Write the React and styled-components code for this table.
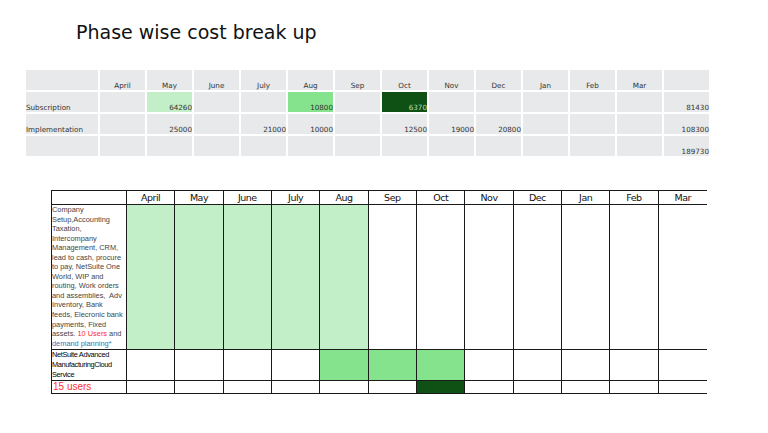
import React from "react";
import styled, { createGlobalStyle } from "styled-components";

const GlobalStyle = createGlobalStyle`
  html, body {
    margin: 0;
    padding: 0;
    background: #ffffff;
  }
`;

const Page = styled.div`
  width: 768px;
  height: 433px;
  overflow: hidden;
  display: flex;
  flex-direction: column;
  font-family: "DejaVu Sans", Verdana, sans-serif;
`;

const Title = styled.h1`
  margin: 20px 0 0 76px;
  font-size: 19px;
  line-height: 24px;
  font-weight: 400;
  color: #111;
`;

const CostGrid = styled.div`
  margin: 26px 0 0 26px;
  display: grid;
  grid-template-columns: 72px repeat(13, 45px);
  grid-auto-rows: 20px;
  gap: 2px;
  width: 683px;
`;

const CostCell = styled.div`
  background: ${(p) => p.$bg || "#e7e9eb"};
  color: ${(p) => p.$color || "#333"};
  font-size: 7.2px;
  line-height: 9px;
  display: flex;
  align-items: flex-end;
  justify-content: ${(p) => p.$align || "flex-start"};
  box-sizing: border-box;
  white-space: nowrap;
`;

const PlanTable = styled.div`
  margin: 34px 0 0 51px;
  width: 656px;
  display: grid;
  grid-template-columns: 75px repeat(12, 1fr);
  grid-template-rows: 14px 145px 31px 13px;
  border-top: 1px solid #1a1a1a;
  border-left: 1px solid #1a1a1a;
  box-sizing: border-box;
`;

const PlanCell = styled.div`
  background: ${(p) => p.$bg || "#ffffff"};
  border-bottom: 1px solid #1a1a1a;
  border-right: ${(p) => (p.$last ? "none" : "1px solid #1a1a1a")};
  box-sizing: border-box;
  overflow: hidden;
`;

const MonthHead = styled(PlanCell)`
  font-size: 9.5px;
  letter-spacing: -0.5px;
  color: #111;
  text-align: center;
  line-height: 13px;
`;

const ScopeText = styled(PlanCell)`
  font-family: "Liberation Sans", Arial, sans-serif;
  font-size: 7.4px;
  line-height: 9.55px;
  color: #444;
  white-space: nowrap;
`;

const ServiceText = styled(PlanCell)`
  font-family: "Liberation Sans", Arial, sans-serif;
  font-size: 7.4px;
  line-height: 10px;
  letter-spacing: -0.35px;
  color: #000;
  white-space: nowrap;
`;

const UsersText = styled(PlanCell)`
  font-family: "Liberation Sans", Arial, sans-serif;
  font-size: 10px;
  line-height: 11px;
  color: #ff3030;
  padding-left: 1px;
`;

const Red = styled.span`
  color: #ff2a2a;
`;

const Blue = styled.span`
  color: #2e74b5;
`;

const LIGHT = "#c3efc8";
const MID = "#84e38c";
const DARK = "#0f5114";

const months = ["April", "May", "June", "July", "Aug", "Sep", "Oct", "Nov", "Dec", "Jan", "Feb", "Mar"];

const costRows = [
  {
    label: "Subscription",
    values: { May: "64260", Aug: "10800", Oct: "6370" },
    colors: { May: LIGHT, Aug: MID, Oct: DARK },
    total: "81430",
  },
  {
    label: "Implementation",
    values: { May: "25000", July: "21000", Aug: "10000", Oct: "12500", Nov: "19000", Dec: "20800" },
    colors: {},
    total: "108300",
  },
  { label: "", values: {}, colors: {}, total: "189730" },
];

const planRows = [
  { fill: LIGHT, months: ["April", "May", "June", "July", "Aug"] },
  { fill: MID, months: ["Aug", "Sep", "Oct"] },
  { fill: DARK, months: ["Oct"] },
];

export default function App() {
  return (
    <Page>
      <GlobalStyle />
      <Title>Phase wise cost break up</Title>

      <CostGrid>
        <CostCell />
        {months.map((m) => (
          <CostCell key={m} $align="center">
            {m}
          </CostCell>
        ))}
        <CostCell />
        {costRows.map((row, i) => (
          <React.Fragment key={i}>
            <CostCell>{row.label}</CostCell>
            {months.map((m) => (
              <CostCell
                key={m}
                $align="flex-end"
                $bg={row.colors[m]}
                $color={row.colors[m] === DARK ? "#b9dcbc" : undefined}
              >
                {row.values[m]}
              </CostCell>
            ))}
            <CostCell $align="flex-end">{row.total}</CostCell>
          </React.Fragment>
        ))}
      </CostGrid>

      <PlanTable>
        <MonthHead />
        {months.map((m, i) => (
          <MonthHead key={m} $last={i === months.length - 1}>
            {m}
          </MonthHead>
        ))}

        <ScopeText>
          Company
          <br />
          Setup,Accounting
          <br />
          Taxation,
          <br />
          Intercompany
          <br />
          Management, CRM,
          <br />
          lead to cash, procure
          <br />
          to pay, NetSuite One
          <br />
          World, WIP and
          <br />
          routing, Work orders
          <br />
          and assemblies,&nbsp; Adv
          <br />
          Inventory, Bank
          <br />
          feeds, Elecronic bank
          <br />
          payments, Fixed
          <br />
          assets. <Red>10 Users</Red> and
          <br />
          <Blue>demand planning*</Blue>
        </ScopeText>
        {months.map((m, i) => (
          <PlanCell
            key={m}
            $last={i === months.length - 1}
            $bg={planRows[0].months.includes(m) ? planRows[0].fill : undefined}
          />
        ))}

        <ServiceText>
          NetSuite Advanced
          <br />
          ManufacturingCloud
          <br />
          Service
        </ServiceText>
        {months.map((m, i) => (
          <PlanCell
            key={m}
            $last={i === months.length - 1}
            $bg={planRows[1].months.includes(m) ? planRows[1].fill : undefined}
          />
        ))}

        <UsersText>15 users</UsersText>
        {months.map((m, i) => (
          <PlanCell
            key={m}
            $last={i === months.length - 1}
            $bg={planRows[2].months.includes(m) ? planRows[2].fill : undefined}
          />
        ))}
      </PlanTable>
    </Page>
  );
}
